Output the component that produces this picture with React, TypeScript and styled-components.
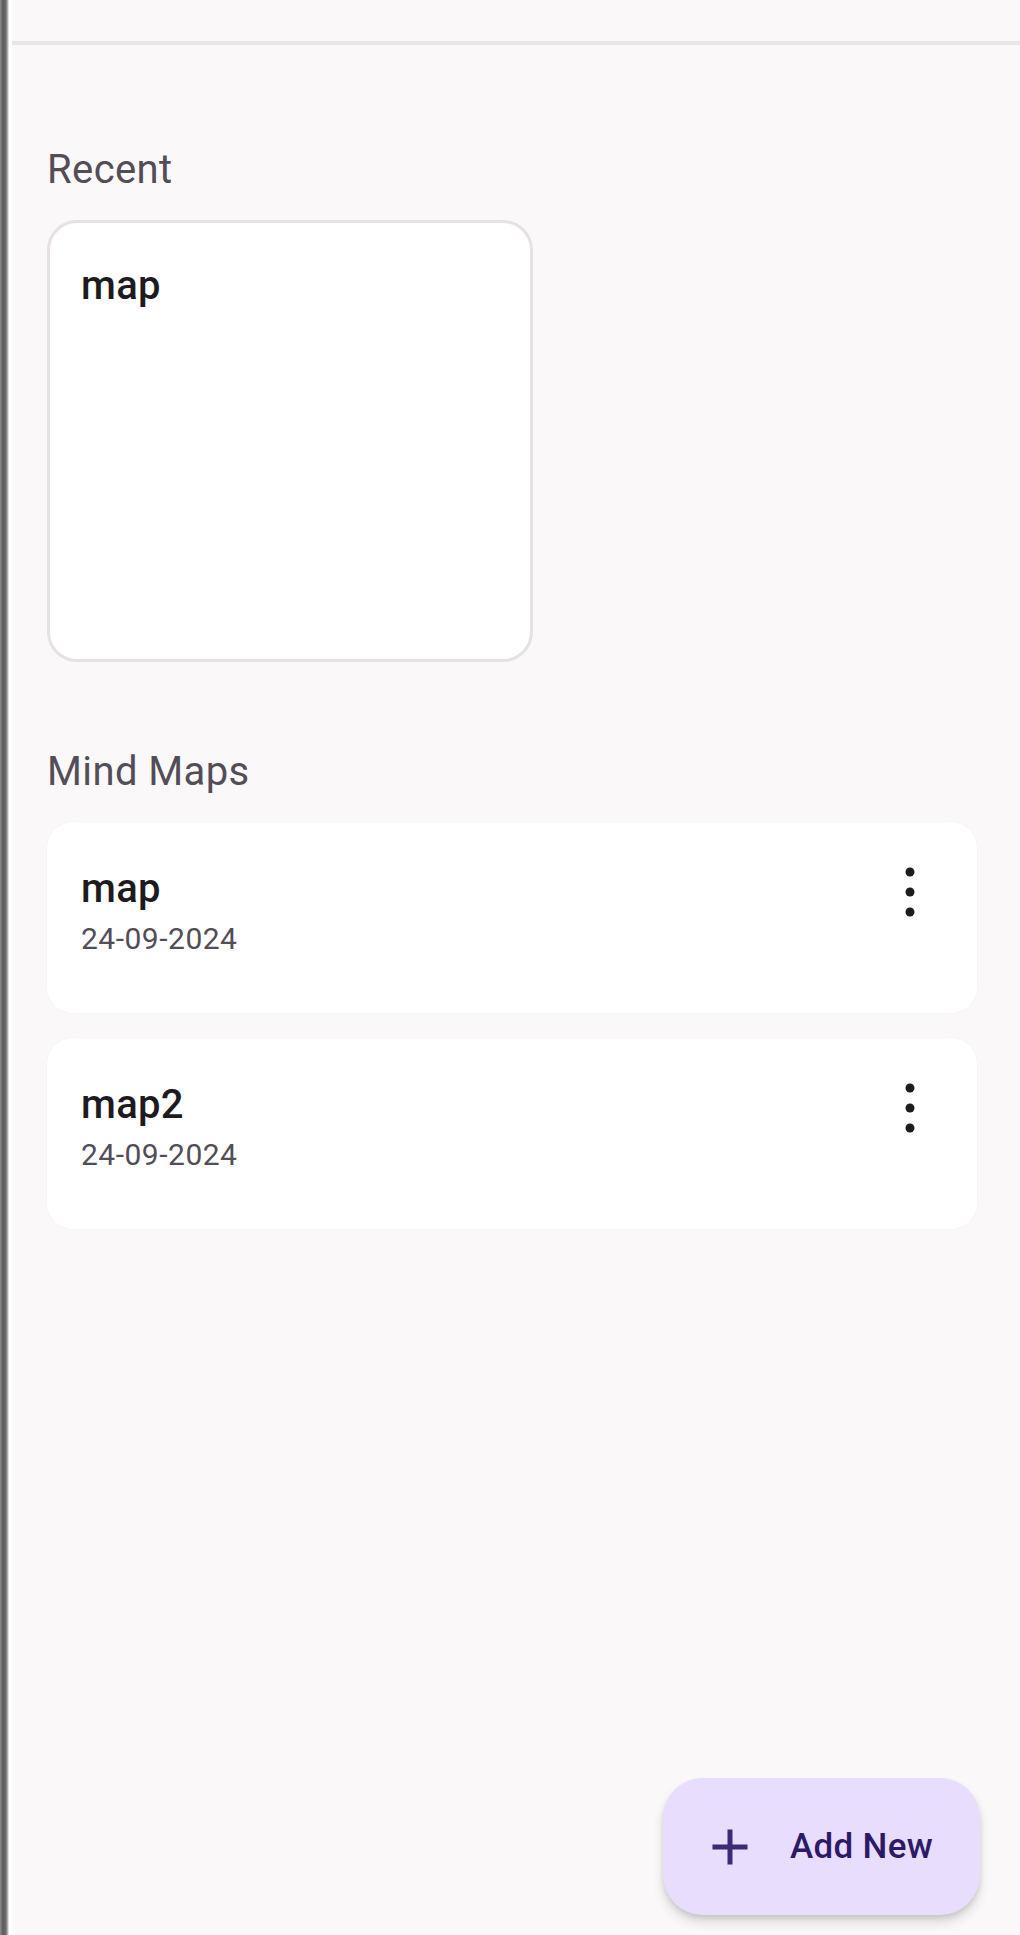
import styled, { createGlobalStyle } from 'styled-components'

const GlobalStyle = createGlobalStyle`
  html, body {
    margin: 0;
    padding: 0;
    background: #fbf8f9;
    font-family: Roboto, "Noto Sans", "Liberation Sans", sans-serif;
  }
  * {
    box-sizing: border-box;
  }
`

const Screen = styled.div`
  position: relative;
  display: flex;
  min-height: 1935px;
  background: #fbf8f9;
`

const FrameEdge = styled.div`
  width: 12px;
  flex-shrink: 0;
  background: linear-gradient(
    to right,
    #8c8c8c 0,
    #5c5c5c 3px,
    #6e6e6e 6px,
    #c4c4c4 8px,
    #ffffff 9px,
    #ffffff 12px
  );
`

const Main = styled.main`
  flex: 1;
  display: flex;
  flex-direction: column;
`

const TopBar = styled.header`
  height: 45px;
  background: #fbf8fa;
  border-bottom: 4px solid #e9e5e9;
`

const Content = styled.div`
  padding: 95px 43px 0 35px;
  display: flex;
  flex-direction: column;
`

const SectionLabel = styled.h2<{ $gapAfter: number }>`
  margin: 0 0 ${(p) => p.$gapAfter}px 0;
  font-size: 40px;
  line-height: 60px;
  font-weight: 400;
  color: #524d57;
  letter-spacing: 0.4px;
`

const RecentCard = styled.div`
  width: 486px;
  height: 442px;
  margin-bottom: 80px;
  padding: 33px 31px;
  background: #ffffff;
  border: 3px solid #e5e1e4;
  border-radius: 30px;
`

const CardTitle = styled.div`
  font-size: 40px;
  line-height: 60px;
  font-weight: 500;
  color: #1d1b20;
  letter-spacing: 0.3px;
`

const CardDate = styled.div`
  font-size: 30px;
  line-height: 40px;
  font-weight: 400;
  color: #524d57;
  letter-spacing: 0.5px;
`

const List = styled.div`
  display: flex;
  flex-direction: column;
  gap: 25px;
`

const ListCard = styled.div`
  height: 191px;
  display: flex;
  justify-content: space-between;
  align-items: flex-start;
  padding: 37px 37px 0 34px;
  background: #ffffff;
  border-radius: 26px;
  box-shadow: 0 0 0 1px rgba(0, 0, 0, 0.015);
`

const MenuButton = styled.button`
  width: 60px;
  height: 60px;
  margin-top: 3px;
  padding: 0;
  border: none;
  background: transparent;
  display: flex;
  align-items: center;
  justify-content: center;
  color: #1d1b20;
  cursor: pointer;
`

const Fab = styled.button`
  position: absolute;
  right: 40px;
  bottom: 20px;
  width: 317px;
  height: 137px;
  display: flex;
  align-items: center;
  gap: 30px;
  padding: 0 0 0 37px;
  border: none;
  border-radius: 40px;
  background: #e9ddfd;
  color: #2c1a66;
  font-family: Roboto, "Noto Sans", sans-serif;
  font-size: 35px;
  font-weight: 500;
  letter-spacing: 0.3px;
  box-shadow: 0 8px 12px rgba(0, 0, 0, 0.12), 0 3px 5px rgba(0, 0, 0, 0.1);
  cursor: pointer;
`

function MoreVert() {
  return (
    <svg width="20" height="60" viewBox="0 0 20 60" fill="currentColor">
      <circle cx="10" cy="10" r="4.5" />
      <circle cx="10" cy="30" r="4.5" />
      <circle cx="10" cy="50" r="4.5" />
    </svg>
  )
}

function AddIcon() {
  return (
    <svg width="60" height="60" viewBox="0 0 24 24" fill="#3b2a78">
      <path d="M19 13h-6v6h-2v-6H5v-2h6V5h2v6h6v2z" />
    </svg>
  )
}

const maps = [
  { id: 1, name: 'map', date: '24-09-2024' },
  { id: 2, name: 'map2', date: '24-09-2024' },
]

function App() {
  return (
    <>
      <GlobalStyle />
      <Screen>
        <FrameEdge />
        <Main>
          <TopBar />
          <Content>
            <SectionLabel $gapAfter={20}>Recent</SectionLabel>
            <RecentCard>
              <CardTitle>map</CardTitle>
            </RecentCard>

            <SectionLabel $gapAfter={20}>Mind Maps</SectionLabel>
            <List>
              {maps.map((m) => (
                <ListCard key={m.id}>
                  <div>
                    <CardTitle>{m.name}</CardTitle>
                    <CardDate>{m.date}</CardDate>
                  </div>
                  <MenuButton aria-label="More">
                    <MoreVert />
                  </MenuButton>
                </ListCard>
              ))}
            </List>
          </Content>
        </Main>
        <Fab>
          <AddIcon />
          <span>Add New</span>
        </Fab>
      </Screen>
    </>
  )
}

export default App
